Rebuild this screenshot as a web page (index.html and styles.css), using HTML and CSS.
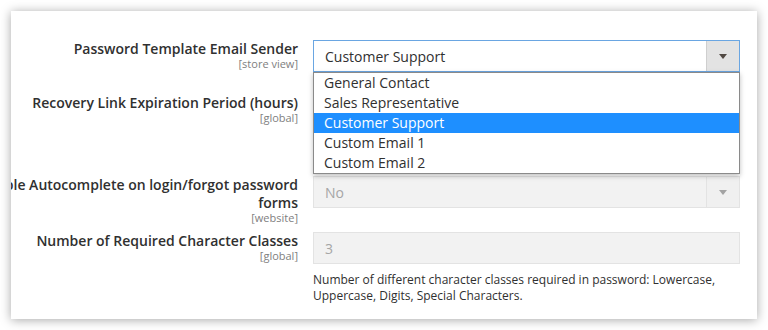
FILE: index.html
```html
<!DOCTYPE html>
<html lang="en">
<head>
    <meta charset="UTF-8">
    <title>Password Options</title>
    <link rel="stylesheet" href="styles.css">
</head>
<body>
  <div class="card">
    <div class="config">

      <div class="row">
        <div class="label">
          <span class="title">Password Template Email Sender</span>
          <span class="scope">[store view]</span>
        </div>
        <div class="value">
          <div class="select focused">
            <span class="current">Customer Support</span>
            <span class="arrow"><i></i></span>
          </div>
          <ul class="options">
            <li>General Contact</li>
            <li>Sales Representative</li>
            <li class="selected">Customer Support</li>
            <li>Custom Email 1</li>
            <li>Custom Email 2</li>
          </ul>
        </div>
      </div>

      <div class="row">
        <div class="label">
          <span class="title">Recovery Link Expiration Period (hours)</span>
          <span class="scope">[global]</span>
        </div>
        <div class="value covered">
          <div class="input"></div>
        </div>
      </div>

      <div class="row">
        <div class="label">
          <span class="title">Enable Autocomplete on login/forgot password forms</span>
          <span class="scope">[website]</span>
        </div>
        <div class="value">
          <div class="select disabled">
            <span class="current">No</span>
            <span class="arrow"><i></i></span>
          </div>
        </div>
      </div>

      <div class="row">
        <div class="label">
          <span class="title">Number of Required Character Classes</span>
          <span class="scope">[global]</span>
        </div>
        <div class="value">
          <div class="input disabled">3</div>
          <p class="note">Number of different character classes required in password: Lowercase, Uppercase, Digits, Special Characters.</p>
        </div>
      </div>

    </div>
  </div>
</body>
</html>
```

FILE: styles.css
```css
body { margin: 0; background: #ffffff; font-family: 'Open Sans', 'Liberation Sans', sans-serif; color: #303030; }
.card { margin: 11px; width: 746px; height: 308px; box-sizing: border-box; background: #fff; box-shadow: 0 1px 10px rgba(0, 0, 0, 0.35); overflow: hidden; padding: 29px 17px 0 0; }
.config { margin-left: -43px; }
.row { display: grid; grid-template-columns: 330px 427px; column-gap: 15px; align-items: start; }
.label { text-align: right; }
.title { display: block; font-size: 14px; font-weight: 600; line-height: 18px; }
.scope { display: block; font-size: 11px; line-height: 12px; color: #808080; }
.value { position: relative; padding-bottom: 22px; }
.value.covered { padding-bottom: 50px; }
.select, .input { height: 32px; box-sizing: border-box; border: 1px solid #adadad; background: #fff; display: flex; align-items: center; font-size: 14px; }
.current, .input { padding-left: 11px; }
.select .current { flex: 1; }
.arrow { width: 33px; height: 100%; box-sizing: border-box; border-left: 1px solid #cfcfcf; background: #e3e3e3; display: flex; align-items: center; justify-content: center; }
.arrow i { width: 0; height: 0; border-left: 4px solid transparent; border-right: 4px solid transparent; border-top: 5px solid #514943; }
.select.focused { border-color: #6aa6e2; }
.select.disabled { margin-bottom: 2px; }
.select.disabled, .input.disabled { background: #f2f2f2; border-color: #e3e3e3; color: #a6a6a6; }
.select.disabled .arrow { background: #f0f0f0; border-left-color: #e3e3e3; }
.select.disabled .arrow i { border-top-color: #a3a3a3; }
.options { position: absolute; top: 32px; left: 0; width: 427px; box-sizing: border-box; margin: 0; padding: 0; list-style: none; background: #fff; border: 1px solid #8a8a8a; box-shadow: 0 2px 5px rgba(0, 0, 0, 0.25); z-index: 2; }
.options li { height: 20px; line-height: 20px; padding-left: 10px; font-size: 14px; }
.options li.selected { background: #1e8fff; color: #fff; }
.note { margin: 8px 0 0; font-size: 12px; line-height: 16px; }
```
